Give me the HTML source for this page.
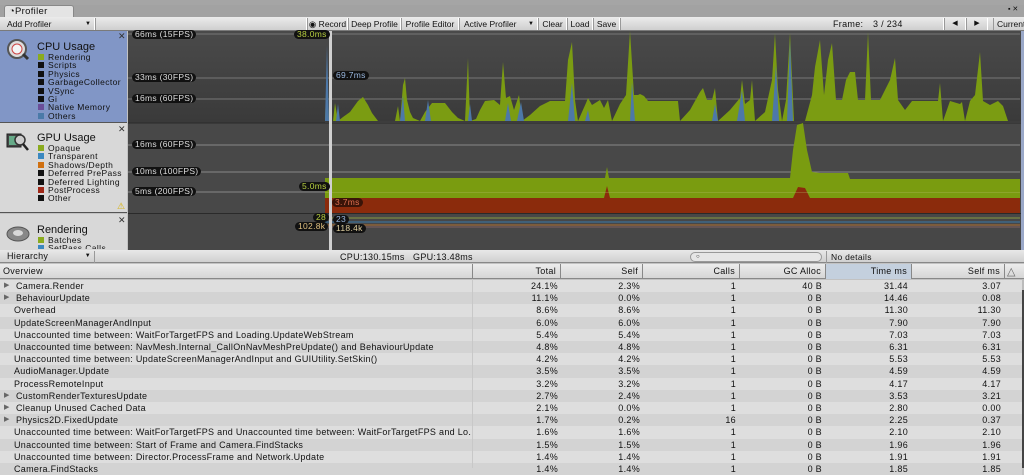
<!DOCTYPE html>
<html><head><meta charset="utf-8">
<style>
*{margin:0;padding:0;box-sizing:border-box}
body{width:1024px;height:468px;overflow:hidden;background:#c2c2c2;font-family:"Liberation Sans",sans-serif;font-size:9px;color:#111;position:relative}
.a{position:absolute}
.btn{position:absolute;top:18px;height:12px;border-left:1px solid #999;border-right:1px solid #fff;line-height:12px;text-align:center;font-size:8.5px;letter-spacing:0;white-space:nowrap;overflow:hidden}
.lbl{position:absolute;background:#111;color:#ddd;border-radius:5px;padding:0 3px;font-size:8.5px;line-height:9px;height:9px;letter-spacing:.3px}
.leg{position:absolute;left:38px;font-size:8.5px;line-height:8.4px;color:#111;letter-spacing:.4px}
.leg i{display:inline-block;width:6px;height:6px;margin-right:4px;vertical-align:0}
.row{position:absolute;left:0;width:1022px;height:12.2px;line-height:12.2px;font-size:9px;letter-spacing:.3px}
.row span{position:absolute;text-align:right;white-space:nowrap}
.hd{position:absolute;top:264px;height:15px;line-height:15px;text-align:right;padding-right:4px;border-right:1px solid #888;font-size:9px;letter-spacing:.3px}
</style></head><body>
<div class="a" style="left:0;top:0;width:1024px;height:5px;background:#a5a5a5"></div>
<div class="a" style="left:0;top:5px;width:1024px;height:12px;background:#a2a2a2"></div>
<div class="a" style="left:4px;top:5px;width:70px;height:13px;background:#e4e4e4;border:1px solid #888;border-bottom:none;border-radius:3px 3px 0 0;line-height:12px;padding-left:4px;font-size:9.5px;letter-spacing:.3px">&#9684;Profiler</div>
<div class="a" style="left:1008px;top:5px;font-size:7px">▪ ✕</div>
<div class="a" style="left:0;top:17px;width:1024px;height:14px;background:linear-gradient(#ebebeb,#cfcfcf);border-bottom:1px solid #7a7a7a"></div>
<div class="btn" style="left:3px;width:92px;border-left:none;text-align:left;padding-left:4px">Add Profiler<span style="position:absolute;right:3px;font-size:6px">▼</span></div>
<div class="btn" style="left:95px;width:212px"></div>
<div class="btn" style="left:307px;width:41px">◉ Record</div>
<div class="btn" style="left:348px;width:53px">Deep Profile</div>
<div class="btn" style="left:401px;width:58px">Profile Editor</div>
<div class="btn" style="left:459px;width:79px;text-align:left;padding-left:4px">Active Profiler<span style="position:absolute;right:3px;font-size:6px">▼</span></div>
<div class="btn" style="left:538px;width:29px">Clear</div>
<div class="btn" style="left:567px;width:26px">Load</div>
<div class="btn" style="left:593px;width:27px">Save</div>
<div class="btn" style="left:620px;width:324px"></div>
<div class="a" style="left:833px;top:18px;line-height:12px;letter-spacing:.3px">Frame:</div>
<div class="a" style="left:873px;top:18px;line-height:12px;letter-spacing:.3px">3 / 234</div>
<div class="btn" style="left:944px;width:22px;font-size:7px">◀</div>
<div class="btn" style="left:966px;width:22px;font-size:7px">▶</div>
<div class="btn" style="left:993px;width:40px;text-align:left;padding-left:3px">Current</div>

<div class="a" style="left:0;top:31px;width:127px;height:92px;background:#8196c6;border-bottom:1px solid #555"></div>
<div class="a" style="left:0;top:123px;width:127px;height:90px;background:#d8d8d8;border-bottom:1px solid #555"></div>
<div class="a" style="left:0;top:214px;width:127px;height:36px;background:#d8d8d8"></div>
<div class="a" style="left:118px;top:31px;font-size:9px;color:#333">✕</div>
<div class="a" style="left:118px;top:124px;font-size:9px;color:#333">✕</div>
<div class="a" style="left:118px;top:215px;font-size:9px;color:#333">✕</div>
<svg class="a" style="left:6px;top:37px" width="24" height="24"><circle cx="11" cy="12" r="9" fill="#ddd" stroke="#555" stroke-width="2"/><circle cx="11" cy="12" r="5" fill="#f5f5f5" stroke="#c44" stroke-width="1"/><line x1="17" y1="17" x2="22" y2="22" stroke="#333" stroke-width="3"/></svg>
<svg class="a" style="left:6px;top:131px" width="24" height="22"><rect x="1" y="3" width="14" height="13" fill="#444" stroke="#222"/><rect x="3" y="5" width="10" height="9" fill="#6a8"/><circle cx="14" cy="9" r="5" fill="#ccc" stroke="#333" stroke-width="1.5"/><line x1="17" y1="13" x2="22" y2="19" stroke="#222" stroke-width="2.5"/></svg>
<svg class="a" style="left:5px;top:222px" width="26" height="22"><ellipse cx="13" cy="12" rx="11" ry="7" fill="#888" stroke="#555"/><ellipse cx="13" cy="11" rx="5" ry="3" fill="#d8d8d8"/></svg>
<div class="a" style="left:37px;top:41px;font-size:11px;color:#111">CPU Usage</div>
<div class="leg" style="top:53px"><i style="background:#8aab1e"></i>Rendering<br><i style="background:#111"></i>Scripts<br><i style="background:#111"></i>Physics<br><i style="background:#111"></i>GarbageCollector<br><i style="background:#111"></i>VSync<br><i style="background:#111"></i>Gi<br><i style="background:#6b4f9a"></i>Native Memory<br><i style="background:#4a7aa8"></i>Others</div>
<div class="a" style="left:37px;top:132px;font-size:11px">GPU Usage</div>
<div class="leg" style="top:144px"><i style="background:#8aab1e"></i>Opaque<br><i style="background:#3a88c0"></i>Transparent<br><i style="background:#d07010"></i>Shadows/Depth<br><i style="background:#111"></i>Deferred PrePass<br><i style="background:#111"></i>Deferred Lighting<br><i style="background:#a02818"></i>PostProcess<br><i style="background:#111"></i>Other</div>
<div class="a" style="left:117px;top:201px;color:#d8b000;font-size:9px">⚠</div>
<div class="a" style="left:37px;top:224px;font-size:11px">Rendering</div>
<div class="leg" style="top:236px;height:13px;overflow:hidden"><i style="background:#8aab1e"></i>Batches<br><i style="background:#3a88c0"></i>SetPass Calls</div>

<svg class="a" style="left:128px;top:31px" width="896" height="219" viewBox="128 31 896 219">
<defs><linearGradient id="bg" x1="0" y1="0" x2="0" y2="1"><stop offset="0" stop-color="#4a4a4a"/><stop offset="1" stop-color="#3a3a3a"/></linearGradient></defs>
<rect x="128" y="31" width="896" height="92" fill="url(#bg)"/>
<rect x="128" y="123" width="896" height="91" fill="#484848"/>
<rect x="128" y="214" width="896" height="36" fill="#474747"/>
<line x1="128" y1="123" x2="1022" y2="123" stroke="#2a2a2a"/>
<line x1="128" y1="213.5" x2="1022" y2="213.5" stroke="#2a2a2a"/>
<g stroke="#777" stroke-width="1"><line x1="128" y1="34" x2="1020" y2="34"/><line x1="128" y1="78" x2="1020" y2="78"/><line x1="128" y1="99" x2="1020" y2="99"/></g>
<polygon fill="#7b9c12" points="325,121 327,66 329,121 333,121 335,103 338,121 343,117 350,112 358,101 363,97 368,105 372,113 378,121 395,121 398,106 400,121 403,85 405,78 407,100 410,112 413,118 420,121 425,112 432,103 445,103 452,112 458,118 465,121 468,58 470,121 476,119 480,110 485,101 494,100 500,105 503,62 506,98 510,96 514,110 519,95 522,121 530,115 540,106 550,101 565,101 568,60 572,42 575,100 578,121 586,103 588,98 592,105 600,100 604,108 608,100 612,121 620,104 626,95 630,31 634,95 638,95 640,94 644,96 648,101 678,101 680,121 690,110 700,92 703,88 707,100 712,100 715,88 718,121 730,110 740,98 742,80 745,104 750,100 752,80 755,121 765,112 772,80 775,33 778,90 782,121 786,100 790,33 794,121 805,121 812,95 815,67 820,40 824,95 828,60 832,43 836,100 842,100 846,80 850,72 855,72 858,100 865,100 868,32 871,100 880,100 890,80 895,58 898,100 905,110 912,101 938,101 940,83 943,121 950,101 960,104 962,102 965,121 970,101 975,95 980,52 983,101 990,105 998,101 1003,106 1008,121 1020,121"/>
<polygon fill="#4d78a8" points="325,121 327,45 329,121 336,121 338,104 340,121 400,121 403,95 405,121 425,121 428,100 431,121 468,121 470,104 472,121 505,121 508,103 511,121 517,121 521,102 524,121 568,121 572,83 575,121 585,121 588,110 590,121 630,121 632,82 635,121 712,121 715,104 718,121 737,121 742,90 745,121 772,121 776,65 779,121 787,121 790,40 793,121 1020,121"/>
<rect x="325" y="121" width="697" height="2" fill="#3d3d3d"/>
<g stroke="#888" stroke-width="1"><line x1="128" y1="145" x2="1020" y2="145"/><line x1="128" y1="172" x2="1020" y2="172"/><line x1="128" y1="192" x2="1020" y2="192"/></g>
<polygon fill="#7a9c10" points="325,213 325,178 605,178 607,167 609,178 790,178 793,150 797,125 803,123 807,150 812,172 820,173 848,173 850,179 1020,179 1020,213"/>
<polygon fill="#8b2b0c" points="325,213 325,198 604,198 607,186 610,198 793,198 798,187 805,188 810,198 1020,198 1020,213"/>
<line x1="325" y1="192.5" x2="1020" y2="192.5" stroke="#b5c06a" stroke-width=".6" opacity=".6"/>
<line x1="325" y1="218" x2="1020" y2="218" stroke="#8a9a40"/>
<line x1="325" y1="222" x2="1020" y2="222" stroke="#3a78a8"/>
<line x1="325" y1="225" x2="1020" y2="225" stroke="#b07030"/>
<line x1="325" y1="227" x2="1020" y2="227" stroke="#806060"/>
<rect x="329" y="31" width="3" height="219" fill="#d0d0d0"/>
<rect x="1021" y="31" width="3" height="219" fill="#9aa8c8"/>
</svg>
<div class="lbl" style="left:132px;top:30px">66ms (15FPS)</div>
<div class="lbl" style="left:294px;top:30px;color:#b8d040">38.0ms</div>
<div class="lbl" style="left:132px;top:73px">33ms (30FPS)</div>
<div class="lbl" style="left:333px;top:71px;color:#9ab8e0">69.7ms</div>
<div class="lbl" style="left:132px;top:94px">16ms (60FPS)</div>
<div class="lbl" style="left:132px;top:140px">16ms (60FPS)</div>
<div class="lbl" style="left:132px;top:167px">10ms (100FPS)</div>
<div class="lbl" style="left:132px;top:187px">5ms (200FPS)</div>
<div class="lbl" style="left:299px;top:182px;color:#b8d040">5.0ms</div>
<div class="lbl" style="left:332px;top:198px;color:#e07050;background:#3a1408">3.7ms</div>
<div class="lbl" style="left:313px;top:213px;color:#b8d040">28</div>
<div class="lbl" style="left:333px;top:215px;color:#9ab8e0">23</div>
<div class="lbl" style="left:295px;top:222px;color:#e0c080">102.8k</div>
<div class="lbl" style="left:333px;top:224px;color:#e0d0a0">118.4k</div>

<div class="a" style="left:0;top:250px;width:1024px;height:13px;background:linear-gradient(#e8e8e8,#d0d0d0);border-bottom:1px solid #888"></div>
<div class="a" style="left:3px;top:251px;width:92px;height:12px;line-height:11px;padding-left:4px;border-right:1px solid #999;letter-spacing:.3px">Hierarchy<span style="position:absolute;right:3px;font-size:6px">▼</span></div>
<div class="a" style="left:340px;top:251px;line-height:12px;letter-spacing:.3px">CPU:130.15ms &nbsp; GPU:13.48ms</div>
<div class="a" style="left:690px;top:252px;width:132px;height:10px;border:1px solid #999;border-radius:5px;background:#e6e6e6;font-size:6px;line-height:8px;padding-left:5px">○</div>
<div class="a" style="left:826px;top:251px;width:198px;height:12px;border-left:1px solid #999;line-height:12px;padding-left:4px;font-size:8.5px;letter-spacing:.3px">No details</div>
<div class="a" style="left:0;top:264px;width:1024px;height:15px;background:linear-gradient(#ececec,#d6d6d6);border-bottom:1px solid #888"></div>
<div class="hd" style="left:0;width:473px;text-align:left;padding-left:3px">Overview</div>
<div class="hd" style="left:473px;width:88px">Total</div>
<div class="hd" style="left:561px;width:82px">Self</div>
<div class="hd" style="left:643px;width:97px">Calls</div>
<div class="hd" style="left:740px;width:86px">GC Alloc</div>
<div class="hd" style="left:826px;width:86px;background:#c4d0de">Time ms</div>
<div class="hd" style="left:912px;width:93px">Self ms</div>
<div class="a" style="left:1007px;top:265px;font-size:11px;color:#666">△</div>
<div class="a" style="left:1020px;top:279px;width:4px;height:189px;background:#bbb"></div>
<div class="a" style="left:1021px;top:290px;width:3px;height:178px;background:#444"></div>
<div class="row" style="top:280px;background:#dedede"><span style="left:4px;font-size:7px;color:#666">▶</span><span style="left:16px;text-align:left">Camera.Render</span><span style="right:464px">24.1%</span><span style="right:382px">2.3%</span><span style="right:286px">1</span><span style="right:200px">40 B</span><span style="right:114px">31.44</span><span style="right:21px">3.07</span></div>
<div class="row" style="top:292.2px;background:#d3d3d3"><span style="left:4px;font-size:7px;color:#666">▶</span><span style="left:16px;text-align:left">BehaviourUpdate</span><span style="right:464px">11.1%</span><span style="right:382px">0.0%</span><span style="right:286px">1</span><span style="right:200px">0 B</span><span style="right:114px">14.46</span><span style="right:21px">0.08</span></div>
<div class="row" style="top:304.4px;background:#dedede"><span style="left:14px;text-align:left">Overhead</span><span style="right:464px">8.6%</span><span style="right:382px">8.6%</span><span style="right:286px">1</span><span style="right:200px">0 B</span><span style="right:114px">11.30</span><span style="right:21px">11.30</span></div>
<div class="row" style="top:316.6px;background:#d3d3d3"><span style="left:14px;text-align:left">UpdateScreenManagerAndInput</span><span style="right:464px">6.0%</span><span style="right:382px">6.0%</span><span style="right:286px">1</span><span style="right:200px">0 B</span><span style="right:114px">7.90</span><span style="right:21px">7.90</span></div>
<div class="row" style="top:328.8px;background:#dedede"><span style="left:14px;text-align:left">Unaccounted time between: WaitForTargetFPS and Loading.UpdateWebStream</span><span style="right:464px">5.4%</span><span style="right:382px">5.4%</span><span style="right:286px">1</span><span style="right:200px">0 B</span><span style="right:114px">7.03</span><span style="right:21px">7.03</span></div>
<div class="row" style="top:341px;background:#d3d3d3"><span style="left:14px;text-align:left">Unaccounted time between: NavMesh.Internal_CallOnNavMeshPreUpdate() and BehaviourUpdate</span><span style="right:464px">4.8%</span><span style="right:382px">4.8%</span><span style="right:286px">1</span><span style="right:200px">0 B</span><span style="right:114px">6.31</span><span style="right:21px">6.31</span></div>
<div class="row" style="top:353.2px;background:#dedede"><span style="left:14px;text-align:left">Unaccounted time between: UpdateScreenManagerAndInput and GUIUtility.SetSkin()</span><span style="right:464px">4.2%</span><span style="right:382px">4.2%</span><span style="right:286px">1</span><span style="right:200px">0 B</span><span style="right:114px">5.53</span><span style="right:21px">5.53</span></div>
<div class="row" style="top:365.4px;background:#d3d3d3"><span style="left:14px;text-align:left">AudioManager.Update</span><span style="right:464px">3.5%</span><span style="right:382px">3.5%</span><span style="right:286px">1</span><span style="right:200px">0 B</span><span style="right:114px">4.59</span><span style="right:21px">4.59</span></div>
<div class="row" style="top:377.6px;background:#dedede"><span style="left:14px;text-align:left">ProcessRemoteInput</span><span style="right:464px">3.2%</span><span style="right:382px">3.2%</span><span style="right:286px">1</span><span style="right:200px">0 B</span><span style="right:114px">4.17</span><span style="right:21px">4.17</span></div>
<div class="row" style="top:389.8px;background:#d3d3d3"><span style="left:4px;font-size:7px;color:#666">▶</span><span style="left:16px;text-align:left">CustomRenderTexturesUpdate</span><span style="right:464px">2.7%</span><span style="right:382px">2.4%</span><span style="right:286px">1</span><span style="right:200px">0 B</span><span style="right:114px">3.53</span><span style="right:21px">3.21</span></div>
<div class="row" style="top:402px;background:#dedede"><span style="left:4px;font-size:7px;color:#666">▶</span><span style="left:16px;text-align:left">Cleanup Unused Cached Data</span><span style="right:464px">2.1%</span><span style="right:382px">0.0%</span><span style="right:286px">1</span><span style="right:200px">0 B</span><span style="right:114px">2.80</span><span style="right:21px">0.00</span></div>
<div class="row" style="top:414.2px;background:#d3d3d3"><span style="left:4px;font-size:7px;color:#666">▶</span><span style="left:16px;text-align:left">Physics2D.FixedUpdate</span><span style="right:464px">1.7%</span><span style="right:382px">0.2%</span><span style="right:286px">16</span><span style="right:200px">0 B</span><span style="right:114px">2.25</span><span style="right:21px">0.37</span></div>
<div class="row" style="top:426.4px;background:#dedede"><span style="left:14px;text-align:left">Unaccounted time between: WaitForTargetFPS and Unaccounted time between: WaitForTargetFPS and Lo.</span><span style="right:464px">1.6%</span><span style="right:382px">1.6%</span><span style="right:286px">1</span><span style="right:200px">0 B</span><span style="right:114px">2.10</span><span style="right:21px">2.10</span></div>
<div class="row" style="top:438.6px;background:#d3d3d3"><span style="left:14px;text-align:left">Unaccounted time between: Start of Frame and Camera.FindStacks</span><span style="right:464px">1.5%</span><span style="right:382px">1.5%</span><span style="right:286px">1</span><span style="right:200px">0 B</span><span style="right:114px">1.96</span><span style="right:21px">1.96</span></div>
<div class="row" style="top:450.8px;background:#dedede"><span style="left:14px;text-align:left">Unaccounted time between: Director.ProcessFrame and Network.Update</span><span style="right:464px">1.4%</span><span style="right:382px">1.4%</span><span style="right:286px">1</span><span style="right:200px">0 B</span><span style="right:114px">1.91</span><span style="right:21px">1.91</span></div>
<div class="row" style="top:463px;background:#d3d3d3"><span style="left:14px;text-align:left">Camera.FindStacks</span><span style="right:464px">1.4%</span><span style="right:382px">1.4%</span><span style="right:286px">1</span><span style="right:200px">0 B</span><span style="right:114px">1.85</span><span style="right:21px">1.85</span></div>
<div class="a" style="left:472px;top:279px;width:1px;height:189px;background:#c8c8c8"></div>
</body></html>
